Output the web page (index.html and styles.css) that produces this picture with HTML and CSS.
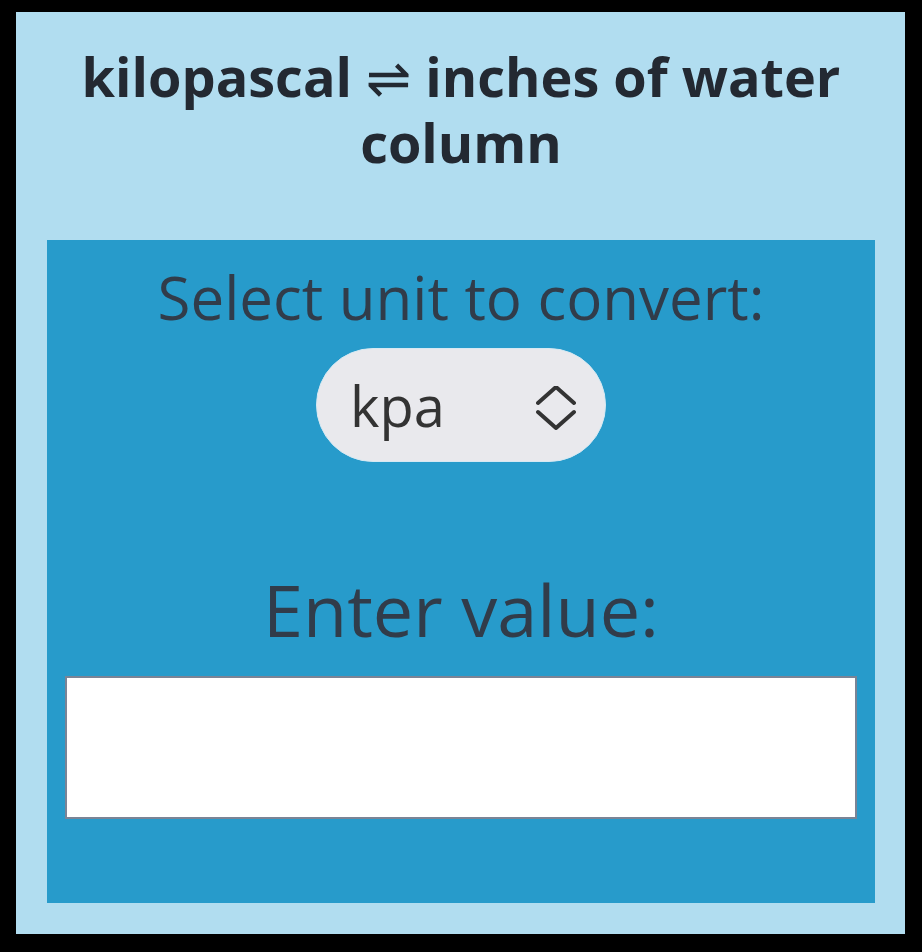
FILE: index.html
```html
<!DOCTYPE html>
<html lang="en">
<head>
    <meta charset="UTF-8">
    <meta name="viewport" content="width=device-width, initial-scale=1.0">
    <title>kilopascal to inches of water column</title>
    <link rel="stylesheet" href="styles.css">
</head>
<body>
    <div class="converter">
        <h1 class="title">kilopascal <span class="swap">&#8652;</span> inches of water column</h1>
        <div class="panel">
            <label for="unitSelect" class="select-label">Select unit to convert:</label>
            <div class="select-wrap">
                <select id="unitSelect" class="unit-select">
                    <option value="kpa">kpa</option>
                    <option value="inwc">inwc</option>
                </select>
                <svg class="select-arrows" width="40" height="44" viewBox="0 0 40 44">
                    <polyline points="2,17 20,1 38,17" fill="none" stroke="#333" stroke-width="4" stroke-linecap="round" stroke-linejoin="round"/>
                    <polyline points="2,26 20,42 38,26" fill="none" stroke="#333" stroke-width="4" stroke-linecap="round" stroke-linejoin="round"/>
                </svg>
            </div>
            <label for="valueInput" class="value-label">Enter value:</label>
            <input type="number" id="valueInput" class="value-input">
        </div>
    </div>
</body>
</html>
```

FILE: styles.css
```css
html, body {
    height: 100%;
}
body {
    margin: 0;
    padding: 12px 17px 18px 16px;
    box-sizing: border-box;
    background-color: #000;
    font-family: "Open Sans", "Liberation Sans", sans-serif;
}
.converter {
    display: flex;
    flex-direction: column;
    height: 100%;
    background-color: #b1ddf0;
    padding: 31px 30px 31px 31px;
    box-sizing: border-box;
}
.title {
    margin: 0 0 65px;
    font-size: 54px;
    line-height: 66px;
    font-weight: 700;
    text-align: center;
    color: #232932;
}
.swap {
    font-family: "DejaVu Sans", sans-serif;
    font-weight: 400;
    line-height: 1;
}
.panel {
    flex: 1;
    display: flex;
    flex-direction: column;
    align-items: center;
    background-color: #279bcb;
    padding: 21px 18px 40px;
}
.select-label {
    font-size: 60px;
    line-height: 72px;
    color: #313c4a;
}
.select-wrap {
    position: relative;
    margin-top: 15px;
}
.unit-select {
    appearance: none;
    -webkit-appearance: none;
    width: 290px;
    height: 114px;
    padding: 0 0 0 33px;
    border: 1px solid #d6e9f3;
    border-radius: 57px;
    background-color: #e9e9ed;
    font-family: inherit;
    font-size: 56px;
    color: #333;
    cursor: pointer;
}
.select-arrows {
    position: absolute;
    top: 38px;
    left: 220px;
    pointer-events: none;
}
.value-label {
    margin-top: 104px;
    font-size: 72px;
    line-height: 86px;
    color: #313c4a;
}
.value-input {
    align-self: stretch;
    margin-top: 24px;
    height: 143px;
    box-sizing: border-box;
    border: 2px solid #7a8496;
    background-color: #fff;
    font-family: inherit;
    font-size: 56px;
}
```
